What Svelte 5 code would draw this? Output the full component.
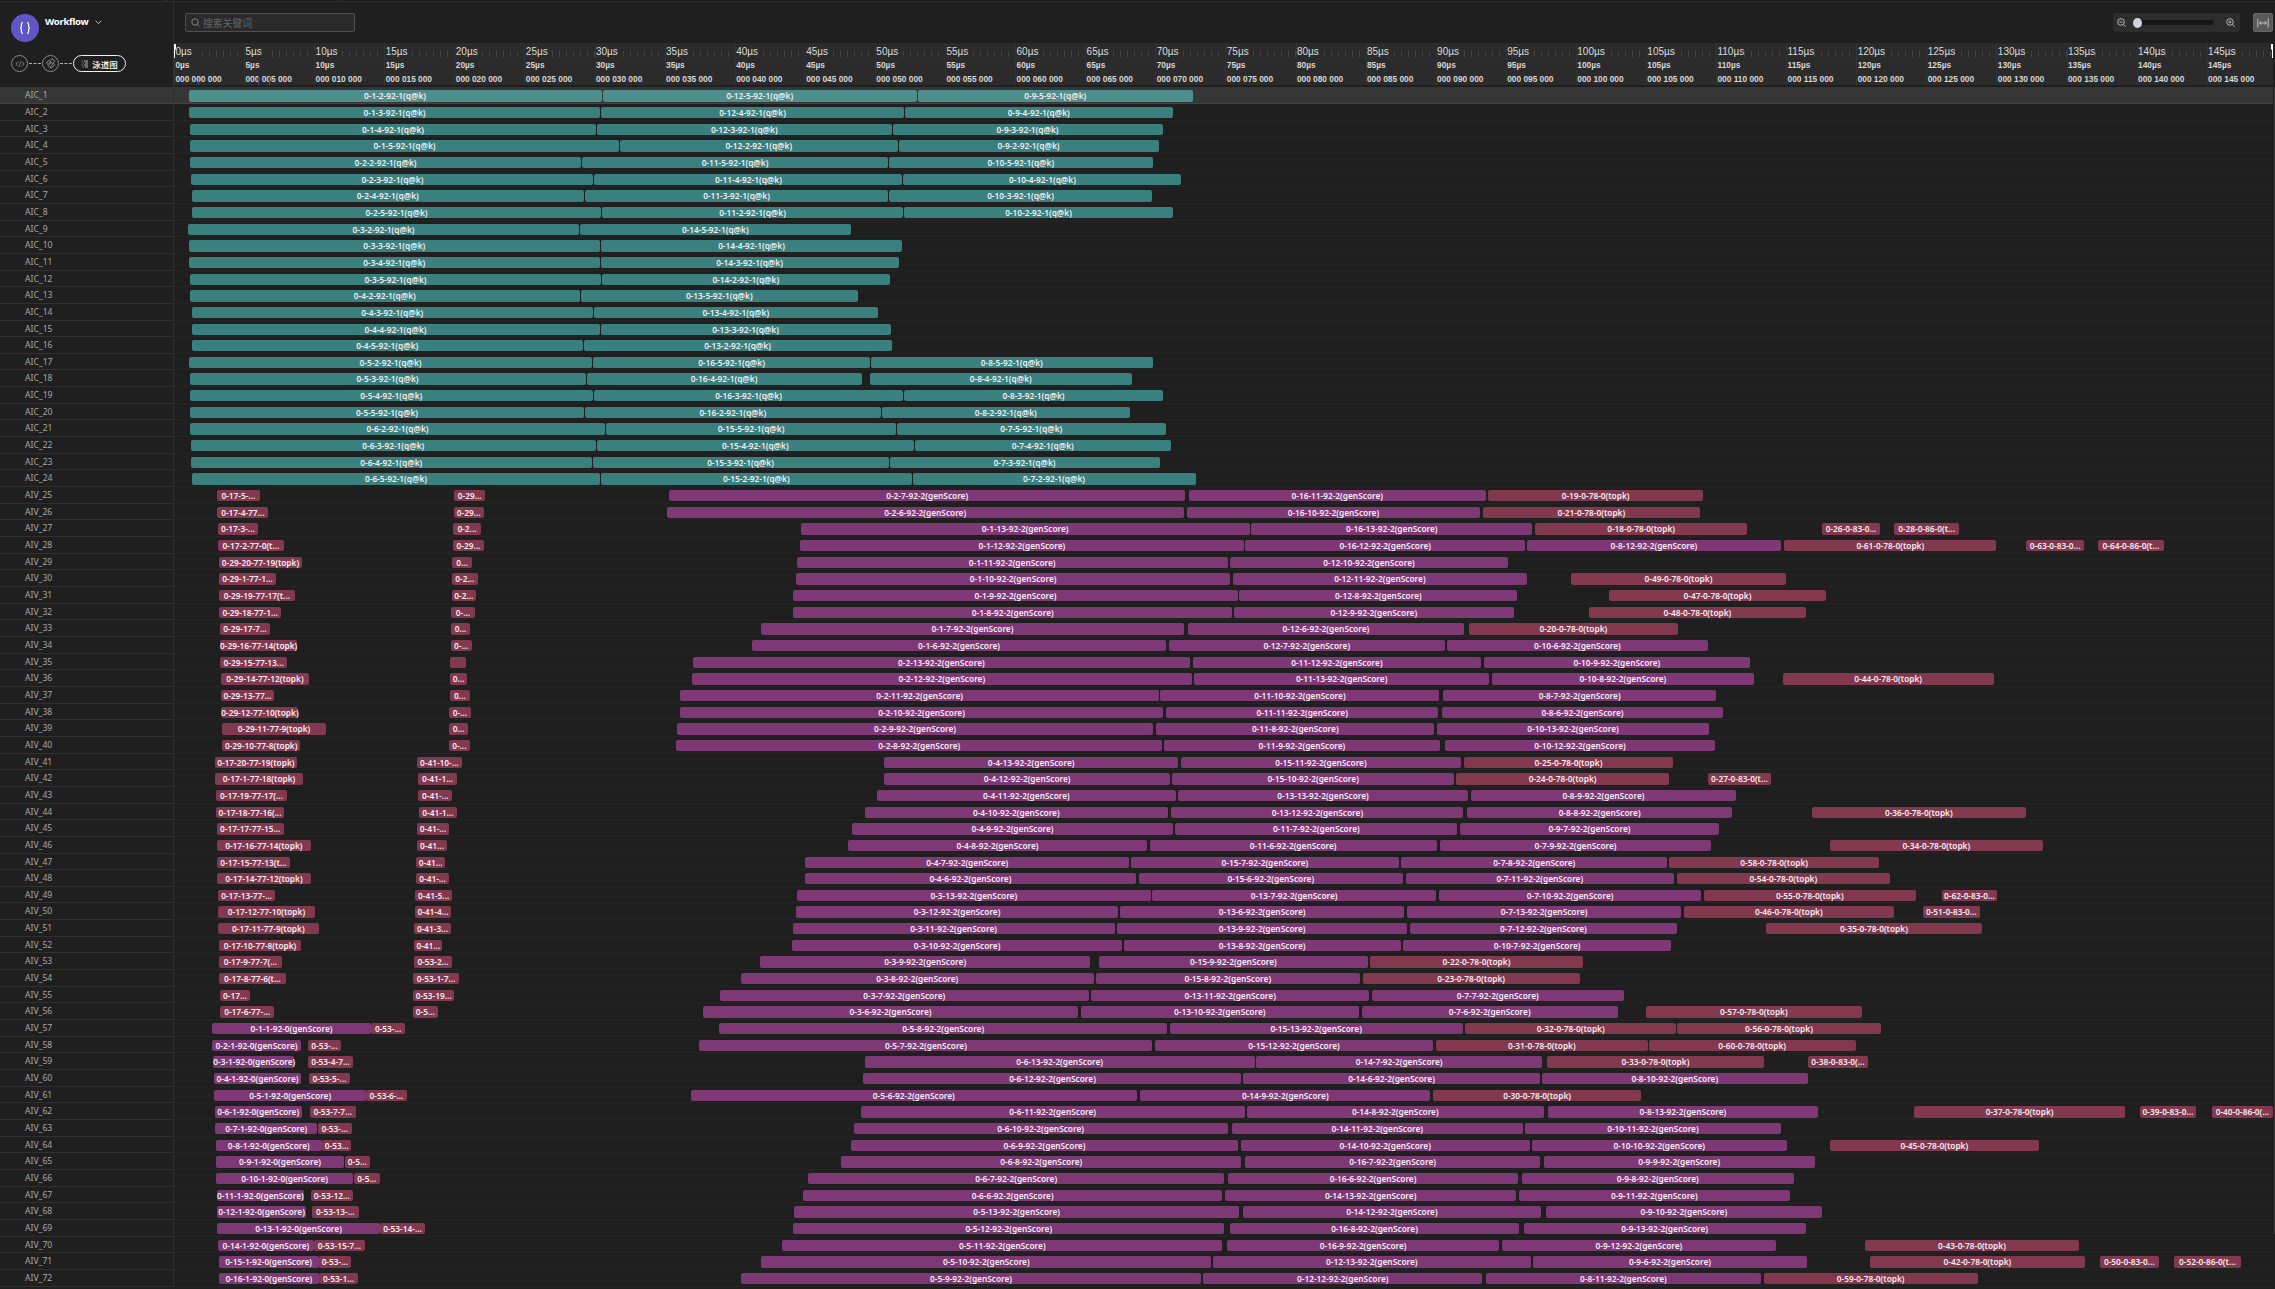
<script>
  // Every bar is kept as [start, end] in viewport pixels; lanes begin at ORIGIN.
  const ORIGIN = 174;
  const MAJOR_TICKS = Array.from({ length: 30 }, (_, i) => i * 5);

  const matmul = (start, end, id) => ({ start, end, kind: "matmul", label: `0-${id}-92-1(q@k)` });
  const score = (start, end, id) => ({ start, end, kind: "score", label: `0-${id}-92-2(genScore)` });
  const first = (start, end, id) => ({ start, end, kind: "score", label: `0-${id}-1-92-0(genScore)` });
  const topk = (start, end, id) => ({ start, end, kind: "topk", label: `0-${id}-0-78-0(topk)` });
  const task = (start, end, label) => ({ start, end, kind: "topk", label });

  // start, seams between neighbouring tasks, end
  const cubeRows = [
    [[188.5, 602, 917.5, 1192.5], ["1-2", "12-5", "9-5"]],
    [[189, 600.5, 904.5, 1172.5], ["1-3", "12-4", "9-4"]],
    [[190, 596.5, 892, 1162.5], ["1-4", "12-3", "9-3"]],
    [[190, 619.5, 898, 1158.5], ["1-5", "12-2", "9-2"]],
    [[190, 581.5, 888.5, 1152.5], ["2-2", "11-5", "10-5"]],
    [[191.3, 594, 903, 1181.5], ["2-3", "11-4", "10-4"]],
    [[191.5, 584.5, 888.5, 1152], ["2-4", "11-3", "10-3"]],
    [[192, 601.5, 903.5, 1173], ["2-5", "11-2", "10-2"]],
    [[188, 579.5, 850.5], ["3-2", "14-5"]],
    [[188.5, 600.5, 902], ["3-3", "14-4"]],
    [[189, 600, 898.5], ["3-4", "14-3"]],
    [[190, 601.5, 889.5], ["3-5", "14-2"]],
    [[190, 580, 858], ["4-2", "13-5"]],
    [[191.5, 593.5, 877.5], ["4-3", "13-4"]],
    [[191.5, 600, 890.5], ["4-4", "13-3"]],
    [[192, 583, 891.5], ["4-5", "13-2"]],
    [[189, 592.5, 870.5, 1152.5], ["5-2", "16-5", "8-5"]],
    [[189.5, 586, 865.5, 1132], ["5-3", "16-4", "8-4"], 8],
    [[189.5, 593.5, 903.5, 1163], ["5-4", "16-3", "8-3"]],
    [[190, 584.5, 881, 1130], ["5-5", "16-2", "8-2"]],
    [[190, 605.5, 896.5, 1165.5], ["6-2", "15-5", "7-5"]],
    [[191, 596, 914.5, 1170.5], ["6-3", "15-4", "7-4"]],
    [[191, 592, 889, 1159.5], ["6-4", "15-3", "7-3"]],
    [[192, 600.5, 912, 1195.5], ["6-5", "15-2", "7-2"]],
  ].map(([edges, ids, lastGap = 1]) =>
    ids.map((id, i) => {
      const before = i === 0 ? 0 : i === 2 ? lastGap / 2 : 0.5;
      const after = i === ids.length - 1 ? 0 : i === 1 ? lastGap / 2 : 0.5;
      return matmul(edges[i] + before, edges[i + 1] - after, id);
    }),
  );

  const vectorRows = [
    [task(217, 259.7, "0-17-5-..."), task(454, 485.3, "0-29..."), score(669, 1185.4, "2-7"), score(1188.9, 1485.7, "16-11"), topk(1488, 1703.3, 19)],
    [task(217.3, 268.3, "0-17-4-77..."), task(453.7, 483.7, "0-29..."), score(666.6, 1183.8, "2-6"), score(1187, 1480, "16-10"), topk(1482.7, 1700, 21)],
    [task(218, 257.7, "0-17-3-..."), task(453.3, 480.7, "0-2..."), score(800.6, 1249.8, "1-13"), score(1251.4, 1532.3, "16-13"), topk(1535.3, 1747, 18), task(1822.3, 1880, "0-26-0-83-0..."), task(1894.3, 1959, "0-28-0-86-0(t...")],
    [task(218.3, 283.7, "0-17-2-77-0(t..."), task(453, 484, "0-29..."), score(799.9, 1243.9, "1-12"), score(1245.5, 1525, "16-12"), score(1527, 1781, "8-12"), topk(1784.3, 1996.3, 61), task(2026, 2084.3, "0-63-0-83-0..."), task(2098, 2164, "0-64-0-86-0(t...")],
    [task(219, 302, "0-29-20-77-19(topk)"), task(452.3, 472, "0..."), score(796.7, 1227.7, "1-11"), score(1230, 1508, "12-10")],
    [task(219, 276, "0-29-1-77-1..."), task(452, 477.7, "0-2..."), score(796.3, 1230, "1-10"), score(1232.8, 1527, "12-11"), topk(1571, 1786, 49)],
    [task(219, 294.7, "0-29-19-77-17(t..."), task(451.7, 476, "0-2..."), score(793.5, 1237.6, "1-9"), score(1239.5, 1517.3, "12-8"), topk(1609, 1826, 47)],
    [task(219.3, 281, "0-29-18-77-1..."), task(451.3, 474.7, "0-..."), score(793.1, 1232.4, "1-8"), score(1234, 1513.7, "12-9"), topk(1589.3, 1805.7, 48)],
    [task(220, 270, "0-29-17-7..."), task(451, 470, "0..."), score(761.1, 1183.8, "1-7"), score(1188.1, 1463.7, "12-6"), topk(1469, 1677.7, 20)],
    [task(220, 297.3, "0-29-16-77-14(topk)"), task(450.7, 471.7, "0-..."), score(752, 1166, "1-6"), score(1168.8, 1444.7, "12-7"), score(1447, 1708, "10-6")],
    [task(220.3, 287, "0-29-15-77-13..."), task(450.3, 466, ""), score(692.7, 1190.1, "2-13"), score(1192.9, 1481, "11-12"), score(1484.3, 1749.7, "10-9")],
    [task(221, 309, "0-29-14-77-12(topk)"), task(450, 467, "0..."), score(691.9, 1191.7, "2-12"), score(1194, 1489.3, "11-13"), score(1492, 1754, "10-8"), topk(1782.7, 1993.7, 44)],
    [task(221, 274, "0-29-13-77..."), task(449.7, 469.7, "0..."), score(680.4, 1158.9, "2-11"), score(1160.5, 1439.3, "11-10"), score(1443.3, 1716, "8-7")],
    [task(221.3, 298, "0-29-12-77-10(topk)"), task(449, 471, "0-..."), score(680, 1163.2, "2-10"), score(1166, 1438.3, "11-11"), score(1442, 1723, "8-6")],
    [task(222, 326, "0-29-11-77-9(topk)"), task(449, 468, "0..."), score(677.3, 1152.9, "2-9"), score(1156.5, 1434, "11-8"), score(1437, 1709, "10-13")],
    [task(222.3, 300, "0-29-10-77-8(topk)"), task(448.7, 470, "0-..."), score(676.5, 1162, "2-8"), score(1164, 1440, "11-9"), score(1445, 1715, "10-12")],
    [task(214.7, 297, "0-17-20-77-19(topk)"), task(417, 461.7, "0-41-10-..."), score(884.5, 1177.8, "4-13"), score(1180.6, 1461.3, "15-11"), topk(1463.7, 1673.3, 25)],
    [task(215, 303, "0-17-1-77-18(topk)"), task(417.7, 457.3, "0-41-1..."), score(884.1, 1170.3, "4-12"), score(1172.3, 1454, "15-10"), topk(1456.3, 1669, 24), task(1708, 1771, "0-27-0-83-0(t...")],
    [task(215.7, 287.3, "0-17-19-77-17(..."), task(418.3, 452.3, "0-41-..."), score(877, 1175.9, "4-11"), score(1178.2, 1468, "13-13"), score(1471, 1736, "8-9")],
    [task(216, 284, "0-17-18-77-16(..."), task(418.7, 457, "0-41-1..."), score(864.7, 1168, "4-10"), score(1171.5, 1463.3, "13-12"), score(1467, 1732.3, "8-8"), topk(1811.7, 2026, 36)],
    [task(216.7, 283.7, "0-17-17-77-15..."), task(417, 449, "0-41-..."), score(852, 1173.1, "4-9"), score(1175.5, 1457.3, "11-7"), score(1460, 1719, "9-7")],
    [task(217, 310.7, "0-17-16-77-14(topk)"), task(416.7, 447.3, "0-41..."), score(847.7, 1147.4, "4-8"), score(1149.8, 1436.7, "11-6"), score(1440.3, 1711, "7-9"), topk(1830, 2042.7, 34)],
    [task(217, 290, "0-17-15-77-13(t..."), task(416, 445.3, "0-41..."), score(805.4, 1129.2, "4-7"), score(1131.2, 1398.7, "15-7"), score(1401.3, 1667.3, "7-8"), topk(1669.3, 1879, 58)],
    [task(217, 311, "0-17-14-77-12(topk)"), task(416, 449, "0-41-..."), score(804.6, 1136.3, "4-6"), score(1138.7, 1403, "15-6"), score(1405.7, 1674, "7-11"), topk(1676.7, 1890, 54)],
    [task(218, 275, "0-17-13-77-..."), task(415.3, 452, "0-41-5..."), score(796.7, 1151, "3-13"), score(1152.5, 1436, "13-7"), score(1439, 1701.3, "7-10"), topk(1704, 1915.7, 55), task(1942, 1997, "0-62-0-83-0...")],
    [task(218, 315, "0-17-12-77-10(topk)"), task(415, 451, "0-41-4..."), score(796.3, 1117.8, "3-12"), score(1120, 1404.3, "13-6"), score(1407.3, 1681, "7-13"), topk(1683.7, 1894, 46), task(1923, 1979.7, "0-51-0-83-0...")],
    [task(218, 318.7, "0-17-11-77-9(topk)"), task(414.3, 450.7, "0-41-3..."), score(792.7, 1114.6, "3-11"), score(1117.4, 1407, "13-9"), score(1410, 1677, "7-12"), topk(1766, 1982, 35)],
    [task(219, 301, "0-17-10-77-8(topk)"), task(414.3, 442.3, "0-41..."), score(792.3, 1121.7, "3-10"), score(1123.7, 1400.7, "13-8"), score(1403.3, 1671, "10-7")],
    [task(219, 281.7, "0-17-9-77-7(..."), task(414, 452, "0-53-2..."), score(760.3, 1090, "3-9"), score(1099.2, 1367.7, "15-9"), topk(1370.3, 1582.7, 22)],
    [task(219.3, 285.7, "0-17-8-77-6(t..."), task(413.3, 459, "0-53-1-7..."), score(741, 1093.6, "3-8"), score(1095.6, 1360, "15-8"), topk(1362.7, 1579.7, 23)],
    [task(220, 250, "0-17..."), task(413, 454.3, "0-53-19..."), score(719.6, 1088.9, "3-7"), score(1091.3, 1369, "13-11"), score(1372, 1623.7, "7-7")],
    [task(220.3, 274, "0-17-6-77-..."), task(412.7, 438, "0-5..."), score(703.4, 1077.8, "3-6"), score(1080.6, 1359, "13-10"), score(1361.7, 1617.7, "7-6"), topk(1646, 1861.7, 57)],
    [first(212.3, 370.7, 1), task(371, 405.3, "0-53-..."), score(719.2, 1167.2, "5-8"), score(1169.6, 1462.7, "15-13"), topk(1465.3, 1676.3, 32), topk(1677, 1881, 56)],
    [first(212.3, 300.7, 2), task(308, 341, "0-53-..."), score(699.4, 1152.5, "5-7"), score(1155, 1433, "15-12"), topk(1435.7, 1648, 31), topk(1648.7, 1855.7, 60)],
    [first(213.3, 294.3, 3), task(308.3, 352.7, "0-53-4-7..."), score(864.7, 1254.6, "6-13"), score(1256.5, 1542, "14-7"), topk(1547, 1764, 33), task(1808, 1868, "0-38-0-83-0(...")],
    [first(214, 301, 4), task(308.7, 350, "0-53-5-..."), score(863.5, 1241.5, "6-12"), score(1243, 1540, "14-6"), score(1542, 1807.7, "8-10")],
    [first(214.3, 366, 5), task(366.3, 406.7, "0-53-6-..."), score(691, 1136.7, "5-6"), score(1140.3, 1430.3, "14-9"), topk(1433, 1641.3, 30)],
    [first(214.7, 301.7, 6), task(309.7, 355.7, "0-53-7-7..."), score(860.7, 1244.7, "6-11"), score(1247, 1543.7, "14-8"), score(1548.3, 1817.7, "8-13"), topk(1914, 2125.3, 37), task(2139.7, 2196.3, "0-39-0-83-0..."), task(2211.7, 2273.3, "0-40-0-86-0(...")],
    [first(215.3, 317.3, 7), task(317.7, 351.7, "0-53-..."), score(853.6, 1227.7, "6-10"), score(1232, 1522.7, "14-11"), score(1525, 1781, "10-11")],
    [first(215.7, 322, 8), task(322.3, 351, "0-53..."), score(850.9, 1238, "6-9"), score(1240.7, 1529.7, "14-10"), score(1532, 1786.7, "10-10"), topk(1830, 2038.7, 45)],
    [first(215.7, 344.3, 9), task(344.7, 370, "0-5..."), score(841, 1241.5, "6-8"), score(1245, 1540.3, "16-7"), score(1543.7, 1814.7, "9-9")],
    [first(216, 353.3, 10), task(353.7, 380, "0-5..."), score(807.8, 1224.5, "6-7"), score(1228.5, 1517.7, "16-6"), score(1522, 1793.7, "9-8")],
    [first(216.7, 304, 11), task(311, 352.7, "0-53-12..."), score(803.4, 1222, "6-6"), score(1225, 1516.3, "14-13"), score(1519, 1789.7, "9-11")],
    [first(217, 306, 12), task(311.7, 359, "0-53-13-..."), score(793.9, 1239.5, "5-13"), score(1242.7, 1541.3, "14-12"), score(1546, 1821.7, "9-10")],
    [first(217.3, 379.7, 13), task(380, 425, "0-53-14-..."), score(793, 1224.5, "5-12"), score(1230, 1519, "16-8"), score(1523.7, 1805.7, "9-13")],
    [first(218, 313.7, 14), task(313.7, 365, "0-53-15-7..."), score(782, 1222.5, "5-11"), score(1227, 1499.3, "16-9"), score(1502, 1776, "9-12"), topk(1865, 2079, 43)],
    [first(218.7, 318.7, 15), task(318.7, 351, "0-53-..."), score(761.1, 1211.5, "5-10"), score(1212.6, 1531, "12-13"), score(1533.3, 1806.7, "9-6"), topk(1870.3, 2084.7, 42), task(2100, 2158.7, "0-50-0-83-0..."), task(2174, 2241, "0-52-0-86-0(t...")],
    [first(219, 318.7, 16), task(319, 358, "0-53-1..."), score(741, 1201.2, "5-9"), score(1203.5, 1482, "12-12"), score(1485.7, 1761.3, "8-11"), topk(1763.7, 1977.7, 59)],
  ];

  const lanes = [...cubeRows, ...vectorRows].map((bars, i) => ({
    name: `${i < 24 ? "AIC" : "AIV"}_${i + 1}`,
    bars: bars.map((bar, b) => ({
      ...bar,
      gap: bar.start - (b ? bars[b - 1].end : ORIGIN),
      width: bar.end - bar.start,
    })),
  }));

  let query = $state("");
  let selected = $state(0);

  function nanos(us) {
    return `000 ${String(us).padStart(3, "0")} 000`;
  }
</script>

<div class="app">
  <div class="topline"><i></i><i></i></div>
  <header class="head">
    <div class="brand">
      <div class="title-row">
        <span class="avatar">
          <svg width="14" height="14" viewBox="0 0 14 14" fill="none" stroke="#fff" stroke-width="1.2">
            <path d="M5 1.5C3.6 1.5 3.4 2.2 3.4 3.2v2C3.4 6.3 2.9 7 1.9 7c1 0 1.5.7 1.5 1.8v2c0 1 .2 1.7 1.6 1.7" />
            <path d="M9 1.5c1.4 0 1.6.7 1.6 1.7v2c0 1.1.5 1.8 1.5 1.8-1 0-1.5.7-1.5 1.8v2c0 1-.2 1.7-1.6 1.7" />
          </svg>
        </span>
        <span class="title">Workflow</span>
        <svg class="chevron" width="7" height="5" viewBox="0 0 7 5" fill="none" stroke="#bbb"><path d="M.7.8 3.5 3.6 6.3.8" /></svg>
      </div>
      <div class="steps">
        <span class="step">
          <svg width="10" height="8" viewBox="0 0 10 8" fill="none" stroke="#8a8a8a" stroke-width=".9">
            <path d="M3.2 1.6.9 4l2.3 2.4M6.8 1.6 9.1 4 6.8 6.4M5.8 1.4 4.2 6.6" />
          </svg>
        </span>
        <span class="dash"></span>
        <span class="step">
          <svg width="11" height="11" viewBox="0 0 11 11" fill="none" stroke="#9a9a9a" stroke-width=".9">
            <path d="M1 5.2 4 2.2 5.6 3.8 3 6.4 1.7 5.2M5.4 1.2 8 1.2 9.9 3.4 7.6 5.6 4.6 2.6M5.4 8.8 8.6 5.4 9.8 6.6 7 9.8 5.2 9.8 3 7.6 6.2 4.6" />
          </svg>
        </span>
        <span class="dash"></span>
        <button class="step-pill" type="button">
          <svg width="8" height="8" viewBox="0 0 8 8" stroke="#d8d8d8" stroke-width=".8">
            <path d="M.6 1h1M3 1h4M1.6 3h1M4 3h3M.6 5h1M3 5h4M1.6 7h1M4 7h3" />
          </svg>
          泳道图
        </button>
      </div>
    </div>

    <div class="chart-head">
      <div class="toolbar">
        <label class="search">
          <svg width="9" height="9" viewBox="0 0 9 9" fill="none" stroke="#8b8e95" stroke-width=".9">
            <circle cx="4" cy="4" r="3.2" /><path d="m6.4 6.4 2 2" />
          </svg>
          <input placeholder="搜索关键词" bind:value={query} />
        </label>
        <div class="tools">
          <div class="zoom">
            <svg width="9" height="9" viewBox="0 0 9 9" fill="none" stroke="#c4c4c4" stroke-width=".9">
              <circle cx="4" cy="4" r="3.3" /><path d="m6.4 6.4 2.2 2.2M2.5 4h3" />
            </svg>
            <div class="slider"><span class="thumb"></span></div>
            <svg width="9" height="9" viewBox="0 0 9 9" fill="none" stroke="#c4c4c4" stroke-width=".9">
              <circle cx="4" cy="4" r="3.3" /><path d="m6.4 6.4 2.2 2.2M2.5 4h3M4 2.5v3" />
            </svg>
          </div>
          <button class="fit" type="button" aria-label="Fit width">
            <svg width="12" height="10" viewBox="0 0 12 10" fill="none" stroke="#cfcfcf" stroke-width=".9">
              <path d="M.8.5v9M11.2.5v9M2.6 5h6.8M4.4 3.2 2.6 5l1.8 1.8M7.6 3.2 9.4 5 7.6 6.8" />
            </svg>
          </button>
        </div>
      </div>
      <div class="axis">
        {#each MAJOR_TICKS as us}
          <div class="tick">
            <span class="tick-main">{us}µs</span>
            <span class="tick-sub">{us}µs</span>
            <span class="tick-sub">{nanos(us)}</span>
          </div>
        {/each}
        <span class="handle left"></span>
        <span class="handle right"></span>
        <span class="mark m1"></span>
        <span class="mark m2"></span>
        <span class="mark m3"></span>
      </div>
    </div>
  </header>

  <div class="lanes">
    {#each lanes as lane, i}
      <div class="lane" class:selected={i === selected}>
        <div class="lane-name">{lane.name}</div>
        <div class="track">
          {#each lane.bars as bar}
            <div class="bar {bar.kind}" style="margin-left: {bar.gap}px; width: {bar.width}px">{bar.label}</div>
          {/each}
        </div>
      </div>
    {/each}
    <span class="scroll"></span>
  </div>
</div>

<style>
  :global(body) {
    background: #1f1f1f;
  }

  .app {
    width: 2275px;
    height: 1289px;
    display: flex;
    flex-direction: column;
    overflow: hidden;
    background: #1f1f1f;
    color: #ddd;
    font-family: "Noto Sans", "Noto Sans CJK SC", sans-serif;
  }

  .topline {
    height: 1px;
    flex: none;
    display: flex;
    background: #1a1a1a;
    border-bottom: 1px solid #303030;
  }

  .topline i {
    width: 166px;
    border-right: 1px solid #3a3a3a;
  }

  .topline i + i {
    width: 171px;
  }

  .head {
    display: flex;
    height: 85.33px;
    flex: none;
  }

  .brand {
    box-sizing: border-box;
    width: 174px;
    border-right: 1px solid #303030;
    padding: 12px 0 0 11px;
    flex: none;
  }

  .title-row {
    display: flex;
    height: 28px;
  }

  .avatar {
    width: 28px;
    height: 28px;
    border-radius: 50%;
    background: #6056c6;
    display: grid;
    place-items: center;
  }

  .title {
    margin: 1px 6px 0 6px;
    font-size: 9.6px;
    line-height: 14px;
    font-weight: 700;
    letter-spacing: -0.3px;
    color: #fff;
  }

  .chevron {
    margin-top: 6px;
  }

  .steps {
    display: flex;
    align-items: center;
    height: 17px;
    margin-top: 13px;
  }

  .step {
    box-sizing: border-box;
    width: 17px;
    height: 17px;
    border: 1px solid #8a8a8a;
    border-radius: 50%;
    display: grid;
    place-items: center;
  }

  .dash {
    width: 12px;
    margin: 0 1px;
    border-top: 1px dashed #b0b0b0;
  }

  .step-pill {
    box-sizing: border-box;
    height: 17px;
    width: 53px;
    padding: 0;
    display: flex;
    align-items: center;
    justify-content: center;
    gap: 3px;
    border: 1px solid #f0f0f0;
    border-radius: 9px;
    background: none;
    font: 500 8.5px "Noto Sans CJK SC", sans-serif;
    color: #fff;
  }

  .chart-head {
    flex: 1;
    min-width: 0;
  }

  .toolbar {
    display: flex;
    justify-content: space-between;
    padding: 11px 2px 0 11px;
    height: 30px;
  }

  .search {
    box-sizing: border-box;
    width: 170px;
    height: 19px;
    display: flex;
    align-items: center;
    gap: 3px;
    padding-left: 5px;
    border: 1px solid #4c4f57;
    border-radius: 2px;
    background: #2a2a2a;
  }

  .search input {
    width: 120px;
    padding: 0;
    border: 0;
    outline: 0;
    background: none;
    font: 9.8px "Noto Sans CJK SC", sans-serif;
    color: #ddd;
  }

  .search input::placeholder {
    color: #63666d;
  }

  .tools {
    display: flex;
    gap: 13.5px;
  }

  .zoom {
    box-sizing: border-box;
    width: 127px;
    height: 19px;
    display: flex;
    align-items: center;
    padding: 0 5px 0 4px;
    border-radius: 3px;
    background: #2d2d2d;
  }

  .slider {
    width: 81px;
    height: 5px;
    margin: 0 auto 0 7.5px;
    border-radius: 3px;
    background: #171717;
    display: flex;
    align-items: center;
  }

  .thumb {
    width: 9px;
    height: 10px;
    border-radius: 50%;
    background: #d0d2e2;
  }

  .fit {
    width: 20px;
    height: 19px;
    padding: 0;
    display: grid;
    place-items: center;
    border: 1px solid #686868;
    border-radius: 2px;
    background: #595959;
  }

  .axis {
    position: relative;
    display: flex;
    height: 42px;
    margin-right: 2px;
    background: #2b2b2b;
    overflow: hidden;
  }

  .tick {
    box-sizing: border-box;
    width: 70.1px;
    flex: none;
    padding: 1px 0 0 0.4px;
    display: flex;
    flex-direction: column;
    border-left: 1px solid #333;
    background: repeating-linear-gradient(to right, #444 0 1px, transparent 1px 7.01px) 27px 8px / 43px 6px no-repeat;
    font-family: "Liberation Sans", sans-serif;
    white-space: nowrap;
  }

  .tick-main {
    font-size: 10px;
    line-height: 15px;
    color: #dcdcdc;
  }

  .tick-sub {
    font-size: 8.33px;
    line-height: 13.5px;
    font-weight: 700;
    color: #d8d8d8;
  }

  .handle {
    position: absolute;
    top: 1px;
    width: 2px;
    height: 14px;
    background: #fff;
    clip-path: polygon(0 0, 100% 0, 100% 40%, 50% 40%, 50% 100%, 0 100%);
  }

  .handle.left {
    left: 0;
  }

  .handle.right {
    right: 0;
    transform: scaleX(-1);
  }

  .mark {
    position: absolute;
    top: 34px;
    width: 1px;
    height: 8px;
    background: #44528f;
  }

  .m1 {
    left: 24px;
  }

  .m2 {
    left: 84px;
  }

  .m3 {
    left: 95px;
  }

  .lanes {
    position: relative;
    flex: 1;
  }

  .lane {
    box-sizing: border-box;
    height: 16.6667px;
    display: flex;
  }

  .lane-name {
    box-sizing: border-box;
    width: 174px;
    flex: none;
    padding-left: 25px;
    border-right: 1px solid #303030;
    border-bottom: 1px solid #303030;
    font-size: 8.6px;
    line-height: 17px;
    color: #a8a8a8;
  }

  .track {
    box-sizing: border-box;
    flex: 1;
    display: flex;
    align-items: flex-start;
    margin-right: 2px;
    padding-top: 3px;
    border-bottom: 1px solid #242424;
  }

  .bar {
    flex: none;
    height: 11.3px;
    border-radius: 2px;
    font-size: 8.3px;
    line-height: 11.3px;
    font-weight: 600;
    text-align: center;
    white-space: nowrap;
    color: #f2eef2;
  }

  .matmul {
    background: #39807f;
  }

  .score {
    background: #7f3876;
  }

  .topk {
    background: #82384e;
  }

  .selected .lane-name,
  .selected .track {
    background: #363636;
    border-bottom-color: #444;
  }

  .selected .matmul {
    background: #4e8e8c;
  }

  .scroll {
    position: absolute;
    top: 0;
    right: 0;
    width: 1px;
    height: 1147px;
    background: #3a3a3a;
  }
</style>
